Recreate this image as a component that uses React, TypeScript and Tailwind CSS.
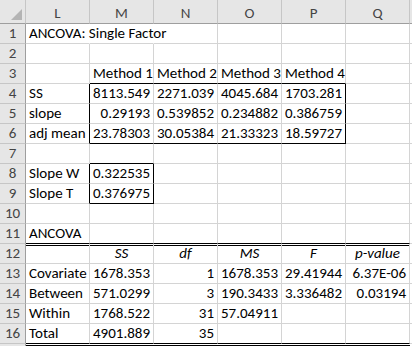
import React from 'react';

type Cell = {
  t?: string;
  num?: boolean; // right aligned
  c?: boolean; // centered
  i?: boolean; // italic
  r?: boolean; // black right edge
  b?: boolean; // black bottom edge
  nr?: boolean; // hide right gridline (text spills over)
  dbl?: boolean; // double rule above
};

const cols = ['L', 'M', 'N', 'O', 'P', 'Q'];

// six cells per row, columns L..Q
const rows: Cell[][] = [
  [{ t: 'ANCOVA: Single Factor', nr: true }, { nr: true }, {}, {}, {}, {}],
  [{}, {}, {}, {}, {}, {}],
  [{}, { t: 'Method 1', b: true }, { t: 'Method 2', b: true }, { t: 'Method 3', b: true }, { t: 'Method 4', b: true }, {}],
  [{ t: 'SS', r: true }, { t: '8113.549', num: true }, { t: '2271.039', num: true }, { t: '4045.684', num: true }, { t: '1703.281', num: true, r: true }, {}],
  [{ t: 'slope', r: true }, { t: '0.29193', num: true }, { t: '0.539852', num: true }, { t: '0.234882', num: true }, { t: '0.386759', num: true, r: true }, {}],
  [{ t: 'adj mean', r: true }, { t: '23.78303', num: true, b: true }, { t: '30.05384', num: true, b: true }, { t: '21.33323', num: true, b: true }, { t: '18.59727', num: true, b: true, r: true }, {}],
  [{}, { b: true }, {}, {}, {}, {}],
  [{ t: 'Slope W', r: true }, { t: '0.322535', num: true, r: true }, {}, {}, {}, {}],
  [{ t: 'Slope T', r: true }, { t: '0.376975', num: true, r: true, b: true }, {}, {}, {}, {}],
  [{}, {}, {}, {}, {}, {}],
  [{ t: 'ANCOVA', b: true }, { b: true }, { b: true }, { b: true }, { b: true }, { b: true }],
  [{ dbl: true }, { t: 'SS', c: true, i: true, dbl: true }, { t: 'df', c: true, i: true, dbl: true }, { t: 'MS', c: true, i: true, dbl: true }, { t: 'F', c: true, i: true, dbl: true }, { t: 'p-value', c: true, i: true, dbl: true }],
  [{ t: 'Covariate' }, { t: '1678.353', num: true }, { t: '1', num: true }, { t: '1678.353', num: true }, { t: '29.41944', num: true }, { t: '6.37E-06', num: true }],
  [{ t: 'Between' }, { t: '571.0299', num: true }, { t: '3', num: true }, { t: '190.3433', num: true }, { t: '3.336482', num: true }, { t: '0.03194', num: true }],
  [{ t: 'Within' }, { t: '1768.522', num: true }, { t: '31', num: true }, { t: '57.04911', num: true }, {}, {}],
  [{ t: 'Total', b: true }, { t: '4901.889', num: true, b: true }, { t: '35', num: true, b: true }, { b: true }, { b: true }, { b: true }],
];

function SheetCell({ cell }: { cell: Cell }) {
  const right = cell.r ? 'border-r-black' : cell.nr ? 'border-r-white' : 'border-r-[#d4d4d4]';
  const bottom = cell.b ? 'border-b-black' : 'border-b-[#d4d4d4]';
  const align = cell.num ? 'justify-end' : cell.c ? 'justify-center' : 'justify-start';
  return (
    <div
      className={`relative flex items-end border-r border-b bg-white px-[3px] pb-[1px] whitespace-nowrap leading-[18px] ${right} ${bottom} ${align} ${
        cell.i ? 'italic' : ''
      } ${cell.dbl ? 'shadow-[inset_0_1px_0_#ffffff,inset_0_2px_0_#000000]' : ''}`}
    >
      {cell.t && <span className={cell.nr ? 'relative z-10' : ''}>{cell.t}</span>}
    </div>
  );
}

export default function App() {
  return (
    <div className="h-[346px] w-[412px] overflow-hidden bg-white font-['Carlito','Calibri','Lato',sans-serif] text-[15px] text-black">
      <div className="grid grid-cols-[26px_repeat(6,64px)_1fr] grid-rows-[24px_repeat(16,20px)_2px]">
        {/* corner */}
        <div className="flex items-end justify-end border-r border-b border-r-[#c6c6c6] border-b-[#9e9e9e] bg-[#e6e6e6] p-[3px]">
          <svg width="11" height="11" viewBox="0 0 11 11">
            <polygon points="11,0 11,11 0,11" fill="#b4b4b4" />
          </svg>
        </div>
        {cols.map((c) => (
          <div
            key={c}
            className="flex items-center justify-center border-r border-b border-r-[#c6c6c6] border-b-[#9e9e9e] bg-[#e6e6e6] pt-[2px] leading-[22px] text-[#444444]"
          >
            {c}
          </div>
        ))}
        <div className="border-b border-b-[#9e9e9e] bg-[#e6e6e6]" />

        {rows.map((row, ri) => (
          <React.Fragment key={ri}>
            <div className="flex items-end justify-center border-r border-b border-r-[#9e9e9e] border-b-[#c6c6c6] bg-[#e6e6e6] pb-[1px] leading-[18px] text-[#444444]">
              {ri + 1}
            </div>
            {row.map((cell, ci) => (
              <SheetCell key={ci} cell={cell} />
            ))}
            <div className="border-b border-b-[#d4d4d4] bg-white" />
          </React.Fragment>
        ))}

        {/* lower half of the closing double rule */}
        <div className="border-r border-r-[#9e9e9e] bg-[#e6e6e6]" />
        {cols.map((c) => (
          <div key={c} className="border-b border-b-black bg-white" />
        ))}
        <div className="bg-white" />
      </div>
    </div>
  );
}
